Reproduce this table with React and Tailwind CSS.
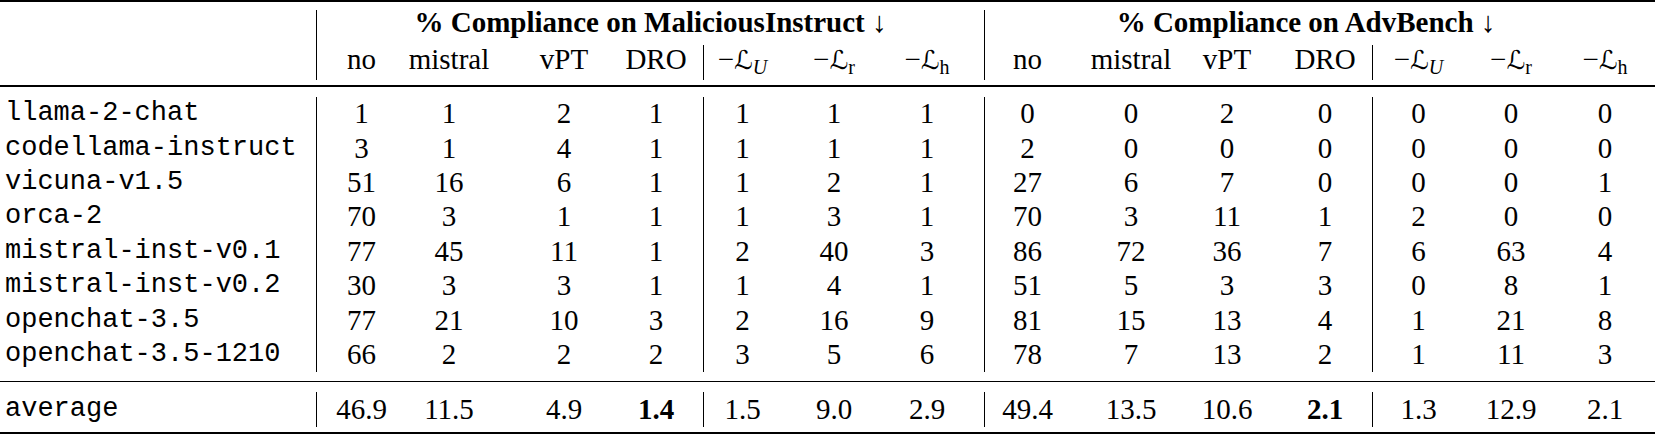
import React from "react";

const GRID =
  "grid grid-cols-[316px_90px_86px_144px_67px_78px_106px_97px_86px_122px_70px_110px_92px_94px_97px]";

const COL = [
  "border-l border-black",
  "",
  "",
  "pr-[27px]",
  "border-l border-black",
  "",
  "pr-[17px]",
  "border-l border-black",
  "",
  "",
  "pl-[16px]",
  "border-l border-black",
  "",
  "pr-[3px]",
];

const rows = [
  ["llama-2-chat", [1, 1, 2, 1, 1, 1, 1, 0, 0, 2, 0, 0, 0, 0]],
  ["codellama-instruct", [3, 1, 4, 1, 1, 1, 1, 2, 0, 0, 0, 0, 0, 0]],
  ["vicuna-v1.5", [51, 16, 6, 1, 1, 2, 1, 27, 6, 7, 0, 0, 0, 1]],
  ["orca-2", [70, 3, 1, 1, 1, 3, 1, 70, 3, 11, 1, 2, 0, 0]],
  ["mistral-inst-v0.1", [77, 45, 11, 1, 2, 40, 3, 86, 72, 36, 7, 6, 63, 4]],
  ["mistral-inst-v0.2", [30, 3, 3, 1, 1, 4, 1, 51, 5, 3, 3, 0, 8, 1]],
  ["openchat-3.5", [77, 21, 10, 3, 2, 16, 9, 81, 15, 13, 4, 1, 21, 8]],
  ["openchat-3.5-1210", [66, 2, 2, 2, 3, 5, 6, 78, 7, 13, 2, 1, 11, 3]],
];

const avg = ["46.9", "11.5", "4.9", "1.4", "1.5", "9.0", "2.9", "49.4", "13.5", "10.6", "2.1", "1.3", "12.9", "2.1"];
const boldIdx = [3, 10];

function L({ sub, italic }) {
  return (
    <span className="whitespace-nowrap">
      <span>−</span>
      <span className="font-['DejaVu_Serif','DejaVu_Sans',serif] italic text-[26px]">ℒ</span>
      <sub className={"text-[20px] " + (italic ? "italic" : "")}>{sub}</sub>
    </span>
  );
}

const headLabels = [
  "no",
  "mistral",
  "vPT",
  "DRO",
  <L sub="U" italic />,
  <L sub="r" />,
  <L sub="h" />,
  "no",
  "mistral",
  "vPT",
  "DRO",
  <L sub="U" italic />,
  <L sub="r" />,
  <L sub="h" />,
];

function Label({ children }) {
  return (
    <div className="flex items-center pl-[5px] font-['Liberation_Mono',monospace] text-[27px] leading-none">
      {children}
    </div>
  );
}

export default function App() {
  return (
    <div className="w-[1655px] h-[436px] bg-white text-black font-['Liberation_Serif',serif] text-[29px] leading-none">
      <div className="h-[2px] bg-black" />
      {/* header */}
      <div className="pt-[8px] pb-[5px]">
        <div className={GRID + " grid-rows-[35px_35px]"}>
          <div className="row-span-2" />
          <div className="col-span-7 border-l border-black flex items-center justify-center font-bold pb-[10px]">
            % Compliance on MaliciousInstruct ↓
          </div>
          <div className="col-span-7 border-l border-black flex items-center justify-center font-bold pb-[10px] pr-[28px]">
            % Compliance on AdvBench ↓
          </div>
          {headLabels.map((h, i) => (
            <div key={i} className={"flex items-center justify-center pb-[6px] " + COL[i]}>
              {h}
            </div>
          ))}
        </div>
      </div>
      <div className="h-[1.5px] bg-black" />
      {/* body */}
      <div className="pt-[10px] pb-[9px]">
        {rows.map(([name, vals]) => (
          <div key={name} className={GRID + " h-[34.4px]"}>
            <Label>{name}</Label>
            {vals.map((v, i) => (
              <div key={i} className={"flex items-center justify-center " + COL[i]}>
                {v}
              </div>
            ))}
          </div>
        ))}
      </div>
      <div className="h-[1.5px] bg-black" />
      {/* average */}
      <div className="pt-[10px] pb-[5px]">
        <div className={GRID + " h-[35px]"}>
          <Label>average</Label>
          {avg.map((v, i) => (
            <div
              key={i}
              className={"flex items-center justify-center " + COL[i] + (boldIdx.includes(i) ? " font-bold" : "")}
            >
              {v}
            </div>
          ))}
        </div>
      </div>
      <div className="h-[2px] bg-black" />
    </div>
  );
}
